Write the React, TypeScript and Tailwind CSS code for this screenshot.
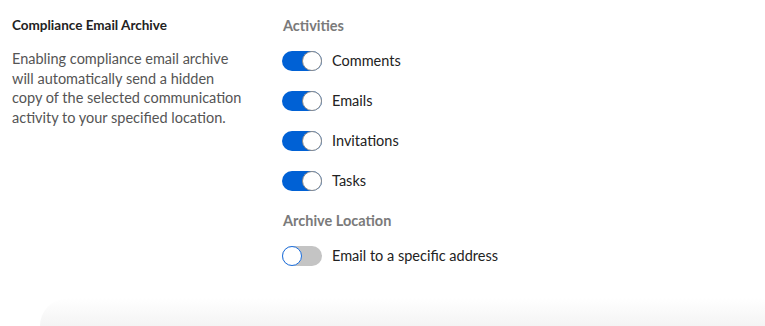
import React, { useState } from 'react';

const Toggle = ({ on, onClick }: { on: boolean; onClick: () => void }) => (
  <button
    type="button"
    onClick={onClick}
    className={`relative h-[20px] w-[40px] shrink-0 rounded-full ${on ? 'bg-[#0061d5]' : 'bg-[#c4c4c4]'}`}
  >
    <span
      className={`absolute top-0 h-[20px] w-[20px] rounded-full bg-white border ${
        on ? 'left-[20px] border-[#8a8a8a]' : 'left-0 border-[#1a6fe0] border-[1.5px]'
      }`}
    />
  </button>
);

const App = () => {
  const [activities, setActivities] = useState([
    { name: 'Comments', on: true },
    { name: 'Emails', on: true },
    { name: 'Invitations', on: true },
    { name: 'Tasks', on: true },
  ]);
  const [emailOn, setEmailOn] = useState(false);

  return (
    <div className="relative w-[765px] h-[326px] bg-white overflow-hidden font-['Lato',sans-serif] text-[#222]">
      <div className="flex pt-[15px]">
        {/* left column */}
        <div className="w-[282px] pl-[12px] pr-[35px]">
          <h2 className="text-[13.5px] font-bold leading-[20px] text-[#222]">Compliance Email Archive</h2>
          <p className="mt-[14px] text-[14.5px] leading-[19.7px] text-[#555]">
            Enabling compliance email archive will automatically send a hidden copy of the selected communication
            activity to your specified location.
          </p>
        </div>

        {/* right column */}
        <div className="flex flex-col pt-[1px]">
          <h3 className="text-[14.5px] font-bold leading-[20px] text-[#7a7a7a] pl-[1px]">Activities</h3>
          <div className="mt-[15px] flex flex-col gap-[20px]">
            {activities.map((a, i) => (
              <label key={a.name} className="flex items-center gap-[10px] h-[20px]">
                <Toggle
                  on={a.on}
                  onClick={() =>
                    setActivities(activities.map((x, j) => (j === i ? { ...x, on: !x.on } : x)))
                  }
                />
                <span className="text-[14.5px] text-[#222]">{a.name}</span>
              </label>
            ))}
          </div>
          <h3 className="mt-[20px] text-[14.5px] font-bold leading-[20px] text-[#7a7a7a] pl-[1px]">Archive Location</h3>
          <label className="mt-[15px] flex items-center gap-[10px] h-[20px]">
            <Toggle on={emailOn} onClick={() => setEmailOn(!emailOn)} />
            <span className="text-[14.5px] text-[#222]">Email to a specific address</span>
          </label>
        </div>
      </div>

      {/* bottom fade shadow */}
      <div className="absolute bottom-0 left-[40px] right-0 h-[28px] bg-gradient-to-b from-transparent to-[#f4f4f4] rounded-tl-[60px]" />
    </div>
  );
};

export default App;
